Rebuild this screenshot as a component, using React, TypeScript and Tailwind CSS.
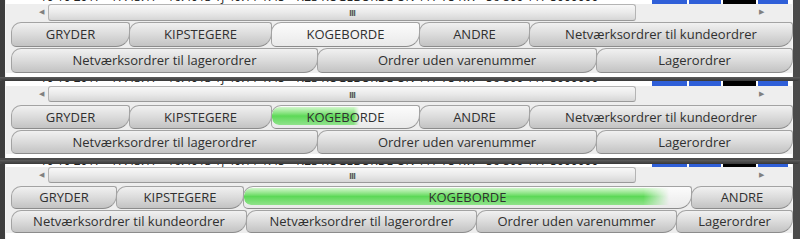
import React from "react";

type TabDef = { label: string; selected?: boolean; progress?: string };

const FONT = { fontFamily: '"Open Sans", "Noto Sans", sans-serif' };

function Tab({ label, selected, progress }: TabDef) {
  return (
    <div
      className={`relative -mr-[1px] flex items-center justify-center overflow-hidden rounded-tl-[10px] rounded-tr-[3px] rounded-br-[14px] rounded-bl-[5px] border border-[#a3a3a3] border-b-[#8c8c8c] text-[13px] text-[#303030] ${
        selected
          ? "bg-gradient-to-b from-[#fcfcfc] to-[#e9e9e9]"
          : "bg-gradient-to-b from-[#f1f1f1] via-[#dbdbdb] to-[#c3c3c3]"
      }`}
    >
      {progress && (
        <div
          className="absolute left-0 top-[1px] bottom-[3px] rounded-l-[7px] bg-gradient-to-b from-[#d2f7cc] via-[#5cd957] to-[#8fe38a]"
          style={{ width: progress, maskImage: "linear-gradient(90deg, #000 94%, transparent)" }}
        />
      )}
      <span className="relative whitespace-nowrap leading-none">{label}</span>
    </div>
  );
}

function TopStrip({ h }: { h: string }) {
  return (
    <div className={`flex overflow-hidden ${h} bg-white`}>
      <div className="flex-1 overflow-hidden">
        <div className="-mt-[9px] whitespace-nowrap pl-[34px] text-[12px] leading-[12px] text-[#222]">
          10 10 2017 &nbsp; 17:43:17 &nbsp; 16:4013 Tj 40:11 1:45 &nbsp; 1:23 KOGEBORDE ON 117 75 KW &nbsp; 56 800 117 5000000
        </div>
      </div>
      <div className="flex w-[140px] gap-[2px] pr-[4px]">
        <div className="w-[35px] bg-[#2f5fd8]" />
        <div className="w-[33px] bg-[#2f5fd8]" />
        <div className="w-[33px] bg-black" />
        <div className="w-[30px] bg-[#2f5fd8]" />
      </div>
    </div>
  );
}

function ScrollBar({ h }: { h: string }) {
  return (
    <div className={`flex items-center ${h} bg-[#eeeeee]`}>
      <div className="flex w-[42px] justify-end pr-[4px]">
        <span className="text-[7px] text-[#808080]">◀</span>
      </div>
      <div className="flex h-full w-[588px] items-center justify-center rounded-[3px] border border-[#b4b4b4] border-b-[#9a9a9a] bg-gradient-to-b from-[#f8f8f8] via-[#eaeaea] to-[#d6d6d6]">
        <span className="text-[9px] font-bold leading-none tracking-[-1px] text-[#555]" style={{ marginRight: "-20px" }}>
          III
        </span>
      </div>
      <div className="flex flex-1 justify-end pr-[28px]">
        <span className="text-[7px] text-[#808080]">▶</span>
      </div>
    </div>
  );
}

function Panel({
  row1,
  row2,
  cols1,
  cols2,
  pad,
  stripH,
  scrollH,
  rowH,
  bottomH,
}: {
  row1: TabDef[];
  row2: TabDef[];
  cols1: string;
  cols2: string;
  pad: string;
  stripH: string;
  scrollH: string;
  rowH: string;
  bottomH: string;
}) {
  return (
    <div className="flex bg-gradient-to-r from-[#3d3d3d] via-[#6a6a6a] to-[#4a4a4a]">
      <div className="w-[5px]" />
      <div className="mr-[7px] flex flex-1 flex-col border-l border-r border-[#f4f4f4] bg-[#eeeeee]">
        <TopStrip h={stripH} />
        <ScrollBar h={scrollH} />
        <div className={`flex flex-col gap-[1px] pl-[5px] ${pad}`}>
          <div className={`grid ${cols1} ${rowH}`}>
            {row1.map((t) => (
              <Tab key={t.label} {...t} />
            ))}
          </div>
          <div className={`grid ${cols2} ${rowH}`}>
            {row2.map((t) => (
              <Tab key={t.label} {...t} />
            ))}
          </div>
        </div>
        <div className={`${bottomH} bg-white`} />
      </div>
    </div>
  );
}

export default function App() {
  const r1 = [
    { label: "GRYDER" },
    { label: "KIPSTEGERE" },
    { label: "KOGEBORDE", selected: true },
    { label: "ANDRE" },
    { label: "Netværksordrer til kundeordrer" },
  ];
  const r2 = [
    { label: "Netværksordrer til lagerordrer" },
    { label: "Ordrer uden varenummer" },
    { label: "Lagerordrer" },
  ];
  return (
    <div className="flex h-[239px] w-[800px] flex-col overflow-hidden bg-[#4a4a4a]" style={FONT}>
      <div className="h-[77px] overflow-hidden">
        <Panel
          row1={r1}
          row2={r2}
          cols1="grid-cols-[118px_142px_148px_110px_1fr]"
          cols2="grid-cols-[306px_279px_1fr]"
          pad="pt-[1px]"
          stripH="h-[4px]"
          scrollH="h-[17px]"
          rowH="h-[25px]"
          bottomH="h-[4px]"
        />
      </div>
      <div className="h-[4px] rounded-b-[4px] bg-gradient-to-b from-[#5c5c5c] to-[#383838]" />
      <div className="h-[79px] overflow-hidden">
        <Panel
          row1={[
            { label: "GRYDER" },
            { label: "KIPSTEGERE" },
            { label: "KOGEBORDE", selected: true, progress: "59%" },
            { label: "ANDRE" },
            { label: "Netværksordrer til kundeordrer" },
          ]}
          row2={r2}
          cols1="grid-cols-[118px_142px_148px_110px_1fr]"
          cols2="grid-cols-[306px_279px_1fr]"
          pad="pt-[3px]"
          stripH="h-[5px]"
          scrollH="h-[16px]"
          rowH="h-[24px]"
          bottomH="h-[4px]"
        />
      </div>
      <div className="h-[4px] rounded-b-[4px] bg-gradient-to-b from-[#5c5c5c] to-[#383838]" />
      <div className="flex-1 overflow-hidden">
        <Panel
          row1={[
            { label: "GRYDER" },
            { label: "KIPSTEGERE" },
            { label: "KOGEBORDE", selected: true, progress: "95%" },
            { label: "ANDRE" },
          ]}
          row2={[
            { label: "Netværksordrer til kundeordrer" },
            { label: "Netværksordrer til lagerordrer" },
            { label: "Ordrer uden varenummer" },
            { label: "Lagerordrer" },
          ]}
          cols1="grid-cols-[105px_127px_448px_1fr]"
          cols2="grid-cols-[235px_230px_200px_1fr]"
          pad="pt-[3px]"
          stripH="h-[3px]"
          scrollH="h-[16px]"
          rowH="h-[23px]"
          bottomH="h-[6px]"
        />
      </div>
    </div>
  );
}
